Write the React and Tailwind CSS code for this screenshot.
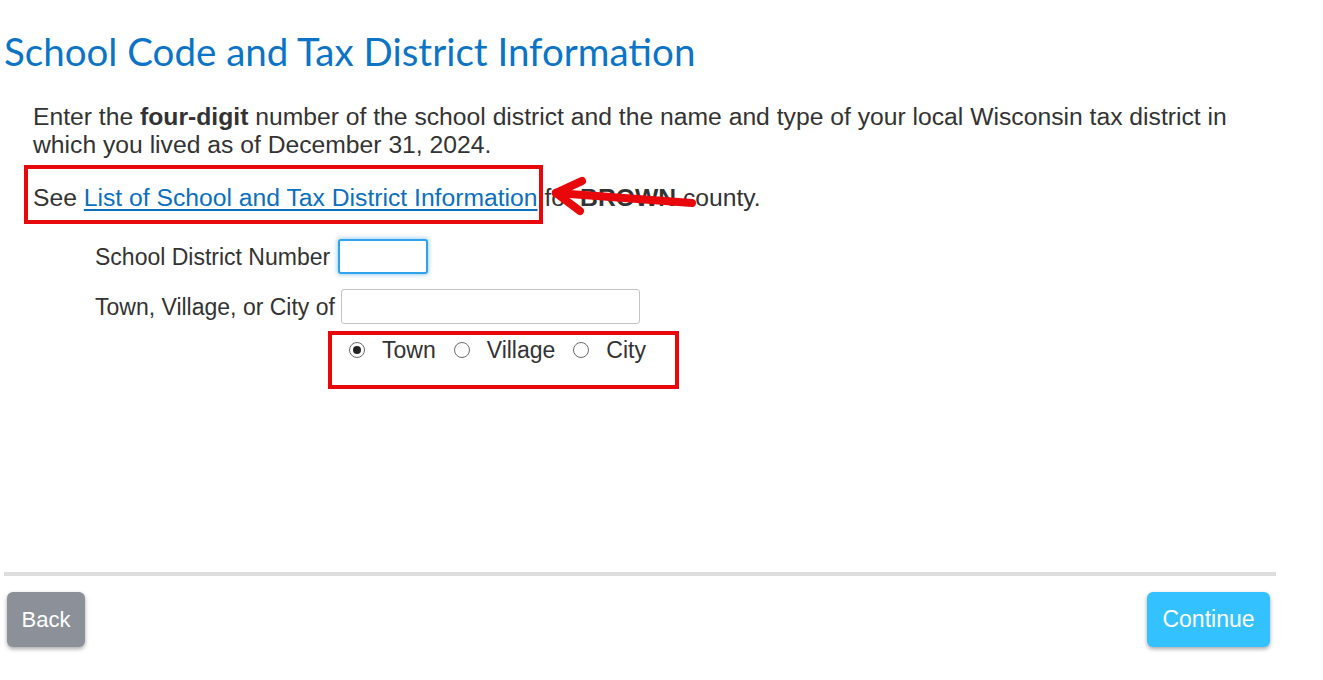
export default function App() {
  const body = { fontFamily: '"Liberation Sans", Arial, sans-serif' };
  return (
    <div className="relative w-[1323px] h-[680px] bg-white overflow-hidden" style={body}>
      <div className="ml-[4px] w-[1272px] flex flex-col">
        <h1
          className="mt-[29px] text-[38.5px] leading-[44px] text-[#0b74c6] font-normal"
          style={{ fontFamily: 'Lato, "Open Sans", sans-serif' }}
        >
          School Code and Tax District Information
        </h1>
        <div className="pl-[29px] text-[23px] leading-[28px] text-[#333333]">
          <p className="mt-[30px] text-[24.7px]">
            Enter the <b>four-digit</b> number of the school district and the name and type of your local Wisconsin tax district in which you lived as of December 31, 2024.
          </p>
          <p className="mt-[25px] text-[24.7px]">
            See{" "}
            <a href="#" className="text-[#0b6fc0] underline underline-offset-[3px]">
              List of School and Tax District Information
            </a>{" "}
            for <b>BROWN</b> county.
          </p>
          <div className="pl-[62px] flex flex-col">
            <div className="mt-[27px] flex items-center h-[35px]">
              <span>School District Number</span>
              <div className="ml-[8px] w-[90px] h-[35px] rounded-[3px] border-2 border-[#2ea3ec] shadow-[0_0_4px_1px_rgba(102,175,233,0.6)] bg-white" />
            </div>
            <div className="mt-[15px] flex items-center h-[35px]">
              <span>Town, Village, or City of</span>
              <div className="ml-[6px] w-[299px] h-[35px] rounded-[3px] border border-[#c4c4c4] bg-white" />
            </div>
            <div className="mt-[12px] flex items-center h-[28px] pl-[254px]">
              <div className="flex items-center gap-[17px]">
                <span className="w-[16px] h-[16px] rounded-full border-[1.5px] border-[#6a6a6a] flex items-center justify-center">
                  <span className="w-[8px] h-[8px] rounded-full bg-[#222]" />
                </span>
                <span>Town</span>
              </div>
              <div className="ml-[18px] flex items-center gap-[17px]">
                <span className="w-[16px] h-[16px] rounded-full border-[1.5px] border-[#6a6a6a]" />
                <span>Village</span>
              </div>
              <div className="ml-[18px] flex items-center gap-[17px]">
                <span className="w-[16px] h-[16px] rounded-full border-[1.5px] border-[#6a6a6a]" />
                <span>City</span>
              </div>
            </div>
          </div>
        </div>
        <div className="mt-[208px] h-[4px] bg-[#dddddd]" />
        <div className="mt-[16px] flex justify-between pl-[3px] pr-[6px]">
          <button className="w-[78px] h-[55px] rounded-[6px] bg-[#8c9098] text-white text-[22px] shadow-[0_2px_4px_rgba(0,0,0,0.35)]">
            Back
          </button>
          <button className="w-[123px] h-[55px] rounded-[6px] bg-[#33c2ff] text-white text-[23px] shadow-[0_2px_4px_rgba(0,0,0,0.35)]">
            Continue
          </button>
        </div>
      </div>

      {/* annotations */}
      <div className="absolute left-[24px] top-[165px] w-[519px] h-[59px] border-[4px] border-[#e8080c]" />
      <div className="absolute left-[328px] top-[331px] w-[351px] h-[58px] border-[4px] border-[#e8080c]" />
      <svg className="absolute left-0 top-0" width="1323" height="680">
        <g stroke="#e8080c" strokeWidth="8" strokeLinecap="round" fill="none">
          <line x1="556" y1="193" x2="692" y2="203" />
          <line x1="556" y1="193" x2="582" y2="181" />
          <line x1="556" y1="193" x2="580" y2="211" />
        </g>
      </svg>
    </div>
  );
}
